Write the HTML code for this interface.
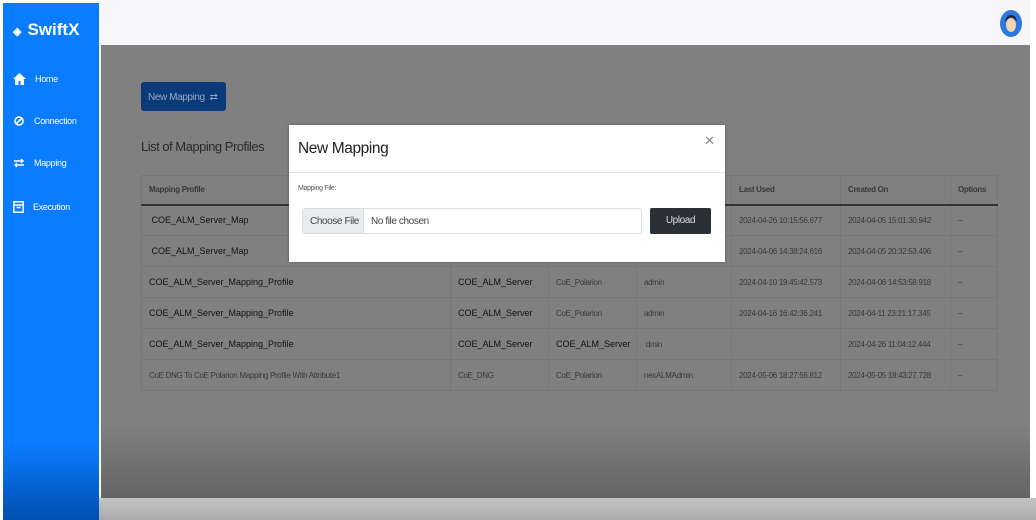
<!DOCTYPE html>
<html><head><meta charset="utf-8"><style>
*{margin:0;padding:0;box-sizing:border-box}
body{width:1036px;height:520px;overflow:hidden;background:#fff;font-family:"Liberation Sans",sans-serif;position:relative}
.sb{position:absolute;left:3px;top:3px;width:96px;height:517px;background:linear-gradient(#0a7cff 0,#0a7cff 440px,#0050b0 517px)}
.sb .logo{position:absolute;left:10px;top:17px;color:#fff;font-size:17px;font-weight:bold}
.sb .it{position:absolute;left:10px;color:#fff;font-size:9px;letter-spacing:-0.3px;display:flex;align-items:center;gap:9px}
.top{position:absolute;left:100px;top:0;width:930px;height:45px;background:#f6f6fb}
.ov{position:absolute;left:101px;top:45px;width:929px;height:453px;background:linear-gradient(#808080 0,#808080 380px,#646464 453px)}
.bot{position:absolute;left:99px;top:498px;width:937px;height:22px;background:linear-gradient(#c4c4c4,#aaa)}
.btn{position:absolute;left:141px;top:82px;width:85px;height:29px;background:#0a3a7a;border-radius:3px;color:#9aa8bf;font-size:10px;letter-spacing:-0.4px;padding:10px 0 0 7px;white-space:nowrap}
h2{position:absolute;left:141px;top:139px;font-weight:normal;font-size:13px;letter-spacing:-0.5px;color:#2a2a2a}
table{position:absolute;left:141px;top:175px;border-collapse:collapse;width:856px;table-layout:fixed;font-size:8px;letter-spacing:-0.3px;color:#383838}
td,th{border:1px solid #777;text-align:left;font-weight:normal;padding:0 7px;height:31px;white-space:nowrap;overflow:hidden}
th{height:29px;font-weight:bold;font-size:8px;border-bottom:2px solid #333}
.b{font-size:9px;color:#111;letter-spacing:0}
.m{position:absolute;left:289px;top:125px;width:436px;height:137px;background:#fff;box-shadow:0 0 3px rgba(0,0,0,.3)}
.m .t{position:absolute;left:9px;top:15px;font-size:15.5px;letter-spacing:-0.4px;color:#222}
.m .x{position:absolute;right:10px;top:8px;font-size:13px;color:#888}
.m .hr{position:absolute;left:0;top:47px;width:100%;border-top:1px solid #e4e4e4}
.m .l{position:absolute;left:9px;top:60px;font-size:7px;color:#555;letter-spacing:-0.3px}
.inp{position:absolute;left:13px;top:83px;width:340px;height:26px;border:1px solid #ddd;border-radius:3px;font-size:10px;letter-spacing:-0.4px;color:#444;white-space:nowrap}
.inp .c{position:absolute;left:0;top:0;width:61px;height:24px;background:#e9ecef;border-right:1px solid #ddd;padding:7px 0 0 7px}
.inp .n{position:absolute;left:68px;top:7px}
.up{position:absolute;left:361px;top:83px;width:61px;height:26px;background:#2b3038;border-radius:2px;color:#ddd;font-size:10px;letter-spacing:-0.4px;text-align:center;line-height:26px}
</style></head><body>
<div class="sb">
<div class="logo"><span style="font-size:11px;margin-right:6px">&#9672;</span>SwiftX</div>
<div class="it" style="top:70px"><svg width="13" height="12" viewBox="0 0 13 12"><path d="M6.5 0L0 6h2v6h3.5V8h2v4H11V6h2z" fill="#fff"/></svg>Home</div>
<div class="it" style="top:112px"><svg width="12" height="12" viewBox="0 0 12 12"><circle cx="6" cy="6" r="4" fill="none" stroke="#fff" stroke-width="1.6"/><path d="M3 9L9 3" stroke="#fff" stroke-width="1.6"/></svg>Connection</div>
<div class="it" style="top:155px"><svg width="12" height="10" viewBox="0 0 12 10"><path d="M1 3h9M8 1l2 2-2 2M11 7H2M4 5L2 7l2 2" stroke="#fff" stroke-width="1.4" fill="none"/></svg>Mapping</div>
<div class="it" style="top:198px"><svg width="11" height="12" viewBox="0 0 11 12"><rect x="0.8" y="0.8" width="9.4" height="10.4" fill="none" stroke="#fff" stroke-width="1.5"/><path d="M1 4h9M3.5 6.5h4" stroke="#fff" stroke-width="1.4"/></svg>Execution</div>
</div>
<div class="top"><svg style="position:absolute;left:900px;top:10px" width="22" height="27" viewBox="0 0 22 27"><ellipse cx="11" cy="13.5" rx="11" ry="13.5" fill="#2a78e0"/><ellipse cx="11" cy="15" rx="5" ry="7" fill="#f2d2b0"/><path d="M5 12q6-9 12 0q-1-7-6-7q-5 0-6 7z" fill="#223"/></svg></div>
<div class="ov"></div>
<div class="btn">New Mapping &nbsp;&#8644;</div>
<h2>List of Mapping Profiles</h2>
<table>
<colgroup><col style="width:309px"><col style="width:98px"><col style="width:88px"><col style="width:95px"><col style="width:109px"><col style="width:110px"><col style="width:47px"></colgroup>
<tr><th>Mapping Profile</th><th></th><th></th><th></th><th>Last Used</th><th>Created On</th><th>Options</th></tr>
<tr><td class="b">&nbsp;COE_ALM_Server_Map</td><td></td><td></td><td></td><td>2024-04-26 10:15:56.677</td><td>2024-04-05 15:01:30.942</td><td>–</td></tr>
<tr><td class="b">&nbsp;COE_ALM_Server_Map</td><td></td><td></td><td></td><td>2024-04-06 14:38:24.616</td><td>2024-04-05 20:32:53.496</td><td>–</td></tr>
<tr><td class="b">COE_ALM_Server_Mapping_Profile</td><td class="b">COE_ALM_Server</td><td>CoE_Polarion</td><td>admin</td><td>2024-04-10 19:45:42.573</td><td>2024-04-06 14:53:58.918</td><td>–</td></tr>
<tr><td class="b">COE_ALM_Server_Mapping_Profile</td><td class="b">COE_ALM_Server</td><td>CoE_Polarion</td><td>admin</td><td>2024-04-16 16:42:36.241</td><td>2024-04-11 23:21:17.345</td><td>–</td></tr>
<tr><td class="b">COE_ALM_Server_Mapping_Profile</td><td class="b">COE_ALM_Server</td><td class="b">COE_ALM_Server</td><td>&nbsp;dmin</td><td></td><td>2024-04-26 11:04:12.444</td><td>–</td></tr>
<tr><td>CoE DNG To CoE Polarion Mapping Profile With Attribute1</td><td>CoE_DNG</td><td>CoE_Polarion</td><td>nexALMAdmin</td><td>2024-05-06 18:27:56.812</td><td>2024-05-05 18:43:27.728</td><td>–</td></tr>
</table>
<div class="m">
<div class="t">New Mapping</div><div class="x">&#10005;</div><div class="hr"></div>
<div class="l">Mapping File:</div>
<div class="inp"><div class="c">Choose File</div><div class="n">No file chosen</div></div>
<div class="up">Upload</div>
</div>
<div class="bot"></div>
</body></html>
